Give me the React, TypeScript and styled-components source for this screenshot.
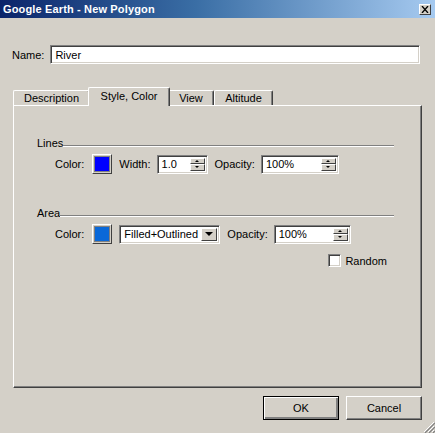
import React from 'react';
import styled, { createGlobalStyle } from 'styled-components';

const FACE = '#d4d0c8';
const SHADOW = '#808080';
const DARK = '#404040';
const FONT = '"Liberation Sans", Arial, sans-serif';

const GlobalStyle = createGlobalStyle`
  html, body {
    margin: 0;
    padding: 0;
    background: ${FACE};
  }
  * {
    box-sizing: border-box;
  }
`;

const Window = styled.div`
  width: 435px;
  height: 433px;
  background: ${FACE};
  font-family: ${FONT};
  font-size: 11px;
  color: #000;
  display: flex;
  flex-direction: column;
  position: relative;
  overflow: hidden;
`;

const TitleBar = styled.div`
  height: 18px;
  flex-shrink: 0;
  display: flex;
  align-items: center;
  justify-content: space-between;
  padding: 0 3px 0 3px;
  background: linear-gradient(to right, #0a246a 0%, #3a6ea5 45%, #a6caf0 100%);
`;

const Title = styled.span`
  color: #fff;
  font-weight: bold;
  font-size: 11px;
  letter-spacing: 0.15px;
`;

const CloseButton = styled.div`
  width: 12px;
  height: 11px;
  margin-right: 1px;
  margin-top: 1px;
  background: ${FACE};
  border-top: 1px solid #fff;
  border-left: 1px solid #fff;
  border-right: 1px solid ${DARK};
  border-bottom: 1px solid ${DARK};
  display: flex;
  align-items: center;
  justify-content: center;
`;

const Body = styled.div`
  flex: 1;
  display: flex;
  flex-direction: column;
  padding: 27px 13px 0 12px;
`;

const NameRow = styled.div`
  display: flex;
  align-items: center;
`;

const sunken = `
  background: #fff;
  border-top: 1px solid ${SHADOW};
  border-left: 1px solid ${SHADOW};
  border-right: 1px solid #fff;
  border-bottom: 1px solid #fff;
  box-shadow: inset 1px 1px 0 ${DARK}, inset -1px -1px 0 ${FACE};
`;

const TextField = styled.div<{ width: number }>`
  ${sunken}
  width: ${({ width }) => width}px;
  height: 19px;
  display: flex;
  align-items: center;
  padding-left: 4px;
  position: relative;
`;

const Label = styled.span<{ gap?: number }>`
  margin-left: ${({ gap }) => gap ?? 0}px;
  margin-right: 6px;
  white-space: nowrap;
`;

const TabStrip = styled.div`
  display: flex;
  align-items: flex-end;
  margin-top: 23px;
  margin-left: 1px;
  height: 18px;
  position: relative;
  z-index: 1;
`;

const Tab = styled.div<{ active?: boolean; width: number }>`
  width: ${({ width }) => width}px;
  height: ${({ active }) => (active ? 19 : 15)}px;
  margin-bottom: ${({ active }) => (active ? -1 : 0)}px;
  background: ${FACE};
  border-top: 1px solid #fff;
  border-left: 1px solid #fff;
  border-right: 1px solid ${DARK};
  box-shadow: inset -1px 0 0 ${SHADOW};
  border-radius: 2px 2px 0 0;
  display: flex;
  align-items: ${({ active }) => (active ? 'flex-start' : 'center')};
  padding-top: ${({ active }) => (active ? 2 : 0)}px;
  justify-content: center;
  margin-left: ${({ active }) => (active ? -2 : 0)}px;
  margin-right: ${({ active }) => (active ? -2 : 0)}px;
  position: relative;
  z-index: ${({ active }) => (active ? 2 : 1)};
`;

const Panel = styled.div`
  margin-left: 1px;
  width: 409px;
  height: 283px;
  border-top: 1px solid #fff;
  border-left: 1px solid #fff;
  border-right: 1px solid ${DARK};
  border-bottom: 1px solid ${DARK};
  box-shadow: inset -1px -1px 0 ${SHADOW};
  padding: 30px 27px 0 23px;
  display: flex;
  flex-direction: column;
`;

const Group = styled.div<{ top?: number }>`
  margin-top: ${({ top }) => top ?? 0}px;
  display: flex;
  flex-direction: column;
`;

const GroupHeader = styled.div`
  display: flex;
  align-items: flex-end;
  height: 13px;
`;

const Rule = styled.div`
  flex: 1;
  height: 2px;
  margin-bottom: 2px;
  border-top: 1px solid ${SHADOW};
  border-bottom: 1px solid #fff;
`;

const Row = styled.div<{ top: number }>`
  display: flex;
  align-items: center;
  margin-top: ${({ top }) => top}px;
  padding-left: 18px;
  height: 20px;
`;

const Swatch = styled.div<{ color: string }>`
  width: 20px;
  height: 20px;
  margin-left: 2px;
  margin-right: 7px;
  border-top: 1px solid #fff;
  border-left: 1px solid #fff;
  border-right: 1px solid ${DARK};
  border-bottom: 1px solid ${DARK};
  padding: 1px;
  display: flex;
  & > span {
    flex: 1;
    background: ${({ color }) => color};
    border: 1px solid ${SHADOW};
  }
`;

const SpinButtons = styled.div`
  position: absolute;
  right: 2px;
  top: 2px;
  bottom: 2px;
  width: 15px;
  display: flex;
  flex-direction: column;
`;

const SpinButton = styled.div`
  flex: 1;
  background: ${FACE};
  border-top: 1px solid #fff;
  border-left: 1px solid #fff;
  border-right: 1px solid ${DARK};
  border-bottom: 1px solid ${DARK};
  display: flex;
  align-items: center;
  justify-content: center;
`;

const Arrow = styled.span<{ up?: boolean }>`
  width: 0;
  height: 0;
  border-left: 2px solid transparent;
  border-right: 2px solid transparent;
  ${({ up }) => (up ? 'border-bottom: 2px solid #000;' : 'border-top: 2px solid #000;')}
`;

const DropButton = styled.div`
  position: absolute;
  right: 2px;
  top: 2px;
  bottom: 2px;
  width: 16px;
  background: ${FACE};
  border-top: 1px solid #fff;
  border-left: 1px solid #fff;
  border-right: 1px solid ${DARK};
  border-bottom: 1px solid ${DARK};
  display: flex;
  align-items: center;
  justify-content: center;
  &::after {
    content: '';
    border-left: 4px solid transparent;
    border-right: 4px solid transparent;
    border-top: 4px solid #000;
  }
`;

const CheckRow = styled.div`
  display: flex;
  align-items: center;
  justify-content: flex-end;
  margin-top: 10px;
  padding-right: 7px;
`;

const CheckBox = styled.div`
  ${sunken}
  width: 13px;
  height: 13px;
  margin-right: 4px;
`;

const Footer = styled.div`
  display: flex;
  justify-content: flex-end;
  gap: 7px;
  margin-top: 8px;
`;

const Button = styled.div<{ isDefault?: boolean }>`
  width: 76px;
  height: 24px;
  display: flex;
  align-items: center;
  justify-content: center;
  background: ${FACE};
  border-top: 1px solid #fff;
  border-left: 1px solid #fff;
  border-right: 1px solid ${DARK};
  border-bottom: 1px solid ${DARK};
  box-shadow: inset -1px -1px 0 ${SHADOW};
  ${({ isDefault }) =>
    isDefault &&
    `
    outline: 1px solid #000;
    outline-offset: -1px;
    box-shadow: inset 1px 1px 0 #fff, inset -2px -2px 0 ${SHADOW};
  `}
`;

const Grip = styled.svg`
  position: absolute;
  right: 0;
  bottom: 0;
`;

const Spin = ({ width, value }: { width: number; value: string }) => (
  <TextField width={width}>
    {value}
    <SpinButtons>
      <SpinButton>
        <Arrow up />
      </SpinButton>
      <SpinButton>
        <Arrow />
      </SpinButton>
    </SpinButtons>
  </TextField>
);

export default function App() {
  return (
    <Window>
      <GlobalStyle />
      <TitleBar>
        <Title>Google Earth - New Polygon</Title>
        <CloseButton>
          <svg width="8" height="7" viewBox="0 0 8 7">
            <path d="M1 0 L7 7 M7 0 L1 7" stroke="#000" strokeWidth="1.3" />
          </svg>
        </CloseButton>
      </TitleBar>
      <Body>
        <NameRow>
          <Label>Name:</Label>
          <TextField width={370}>River</TextField>
        </NameRow>
        <TabStrip>
          <Tab width={77}>Description</Tab>
          <Tab width={82} active>
            Style, Color
          </Tab>
          <Tab width={46}>View</Tab>
          <Tab width={59}>Altitude</Tab>
        </TabStrip>
        <Panel>
          <Group>
            <GroupHeader>
              <span>Lines</span>
              <Rule />
            </GroupHeader>
            <Row top={5}>
              <Label>Color:</Label>
              <Swatch color="#0000ff">
                <span />
              </Swatch>
              <Label>Width:</Label>
              <Spin width={51} value="1.0" />
              <Label gap={7}>Opacity:</Label>
              <Spin width={78} value="100%" />
            </Row>
          </Group>
          <Group top={32}>
            <GroupHeader>
              <span>Area</span>
              <Rule />
            </GroupHeader>
            <Row top={5}>
              <Label>Color:</Label>
              <Swatch color="#0a68d8">
                <span />
              </Swatch>
              <TextField width={101}>
                Filled+Outlined
                <DropButton />
              </TextField>
              <Label gap={7}>Opacity:</Label>
              <Spin width={77} value="100%" />
            </Row>
            <CheckRow>
              <CheckBox />
              <span>Random</span>
            </CheckRow>
          </Group>
        </Panel>
        <Footer>
          <Button isDefault>OK</Button>
          <Button>Cancel</Button>
        </Footer>
      </Body>
      <Grip width="12" height="12" viewBox="0 0 12 12">
        <path d="M11 1 L1 11 M11 5 L5 11 M11 9 L9 11" stroke="#fff" strokeWidth="1" />
        <path d="M12 2 L2 12 M12 6 L6 12 M12 10 L10 12" stroke={SHADOW} strokeWidth="1.2" />
      </Grip>
    </Window>
  );
}
